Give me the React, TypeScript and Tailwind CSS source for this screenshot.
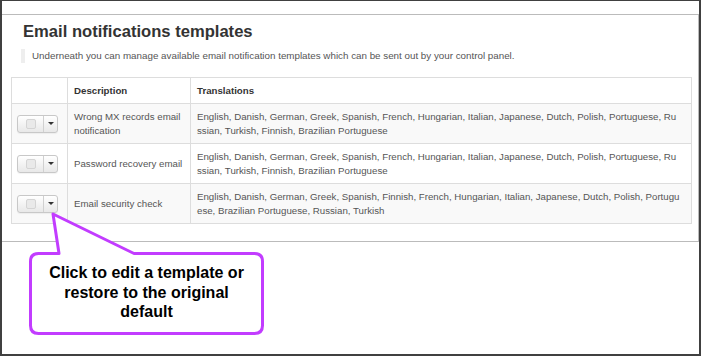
import React from 'react';

const ROWS = [
    {
        description: 'Wrong MX records email notification',
        translations:
            'English, Danish, German, Greek, Spanish, French, Hungarian, Italian, Japanese, Dutch, Polish, Portuguese, Russian, Turkish, Finnish, Brazilian Portuguese'
    },
    {
        description: 'Password recovery email',
        translations:
            'English, Danish, German, Greek, Spanish, French, Hungarian, Italian, Japanese, Dutch, Polish, Portuguese, Russian, Turkish, Finnish, Brazilian Portuguese'
    },
    {
        description: 'Email security check',
        translations:
            'English, Danish, German, Greek, Spanish, Finnish, French, Hungarian, Italian, Japanese, Dutch, Polish, Portuguese, Brazilian Portuguese, Russian, Turkish'
    }
];

function ActionButton() {
    return (
        <div className="flex h-[18px] w-[41px] rounded-[3px] border border-[#c8c8c8] bg-gradient-to-b from-white to-[#e8e8e8] shadow-[0_1px_1px_rgba(0,0,0,0.05)]">
            <div className="flex w-[26px] items-center justify-center border-r border-[#d0d0d0]">
                <div className="h-[10px] w-[10px] rounded-[2px] border border-[#d4d4d4] bg-[#e9e9e9]" />
            </div>
            <div className="flex flex-1 items-center justify-center">
                <div className="h-0 w-0 border-x-[3px] border-t-[3px] border-x-transparent border-t-[#333]" />
            </div>
        </div>
    );
}

function Callout() {
    return (
        <>
            <svg className="absolute left-0 top-0" width="701" height="356" viewBox="0 0 701 356">
                <path
                    d="M38.5 253.5 L59 253.5 L53 214 L134 253.5 L254.5 253.5 Q262.5 253.5 262.5 261.5 L262.5 325.5 Q262.5 333.5 254.5 333.5 L38.5 333.5 Q30.5 333.5 30.5 325.5 L30.5 261.5 Q30.5 253.5 38.5 253.5 Z"
                    fill="white"
                    stroke="#c23cff"
                    strokeWidth="3"
                    strokeLinejoin="round"
                />
            </svg>
            <div className="absolute left-[46px] top-[263px] w-[201px] text-center text-[16px] font-bold leading-[19.5px] text-black">
                Click to edit a template or restore to the original default
            </div>
        </>
    );
}

export default function App() {
    return (
        <div className="relative h-[356px] w-[701px] bg-white font-['Liberation_Sans',Arial,sans-serif]">
            <div className="h-full w-full border-x-2 border-b-2 border-t border-[#404040] pt-[13px]">
                <div className="h-[228px] border-y border-r border-[#bbbbbb] pl-[9px] pt-[7px]">
                    <h1 className="ml-[12px] text-[16.6px] font-bold leading-[20px] text-[#333]">
                        Email notifications templates
                    </h1>
                    <p className="ml-[10px] mt-[7px] border-l-4 border-[#eeeeee] pl-[7px] text-[9.8px] leading-[14px] text-[#555]">
                        Underneath you can manage available email notification templates which can be sent out by your control panel.
                    </p>
                    <table className="mt-[14px] w-[680px] table-fixed border-collapse text-[9.7px] leading-[13.5px] text-[#555]">
                        <colgroup>
                            <col className="w-[56px]" />
                            <col className="w-[123px]" />
                            <col className="w-[501px]" />
                        </colgroup>
                        <thead>
                            <tr className="h-[26px] bg-white">
                                <th className="border border-[#dddddd]" />
                                <th className="border border-[#dddddd] px-[6px] text-left font-bold text-[#333]">Description</th>
                                <th className="border border-[#dddddd] px-[6px] text-left font-bold text-[#333]">Translations</th>
                            </tr>
                        </thead>
                        <tbody>
                            {ROWS.map((row, index) => (
                                <tr key={index} className={`h-[40px] ${index % 2 === 0 ? 'bg-[#f9f9f9]' : 'bg-white'}`}>
                                    <td className="border border-[#dddddd] pl-[5px] align-middle">
                                        <ActionButton />
                                    </td>
                                    <td className="border border-[#dddddd] pl-[6px] pr-[3px] align-middle">{row.description}</td>
                                    <td className="break-all border border-[#dddddd] pl-[6px] pr-[11px] align-middle">{row.translations}</td>
                                </tr>
                            ))}
                        </tbody>
                    </table>
                </div>
            </div>
            <Callout />
        </div>
    );
}
